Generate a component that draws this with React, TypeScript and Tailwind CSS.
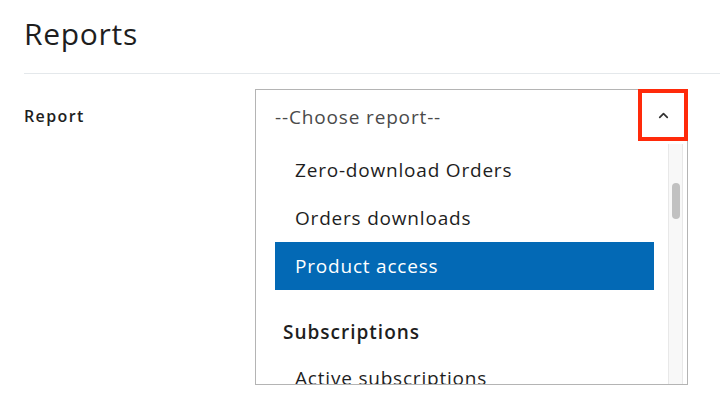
import { ChevronUp } from 'lucide-react';

// ── Reports page ───────────────────────────────────────────────────────────
// Heading, divider and a "Report" field whose select is shown open, with the
// option list scrolled a little and "Product access" highlighted.

type Option = { label: string; selected?: boolean };
type Group = { title?: string; options: Option[] };

const groups: Group[] = [
  {
    options: [
      { label: 'Zero-download Orders' },
      { label: 'Orders downloads' },
      { label: 'Product access', selected: true },
    ],
  },
  {
    title: 'Subscriptions',
    options: [
      { label: 'Active subscriptions' },
      { label: 'Cancelled subscriptions' },
    ],
  },
];

function OptionRow({ option }: { option: Option }) {
  return (
    <div
      className={
        option.selected
          ? 'flex h-12 items-center bg-[#0369b5] pl-5 text-white'
          : 'flex h-12 items-center pl-5 text-[#1e1e1e]'
      }
    >
      {option.label}
    </div>
  );
}

function ReportSelect() {
  return (
    <div className="relative flex h-[296px] w-[433px] flex-col border border-[#b4b4b4] bg-white">
      {/* Closed value row */}
      <div className="flex h-[54px] shrink-0 items-center pl-[19px] text-[19px] tracking-[0.85px] text-[#4a4a4a]">
        --Choose report--
      </div>

      {/* Toggle, outlined in red */}
      <div className="absolute -right-px -top-px flex h-[52px] w-[50px] items-center justify-center border-[4px] border-[#ff2a0a] bg-white">
        <ChevronUp size={15} strokeWidth={2.75} className="text-[#333]" />
      </div>

      {/* Open option list */}
      <div className="flex min-h-0 flex-1">
        <div className="min-w-0 flex-1 overflow-hidden pl-[19px] pr-[14px] pt-[2px] text-[19px] tracking-[0.8px]">
          {groups.map((group, i) => (
            <div key={i}>
              {group.title && (
                <div className="pl-2 pt-[31px] pb-[11px] font-semibold leading-[22px] tracking-[1px] text-[#1e1e1e]">
                  {group.title}
                </div>
              )}
              {group.options.map((o) => (
                <OptionRow key={o.label} option={o} />
              ))}
            </div>
          ))}
        </div>
        {/* Scrollbar */}
        <div className="mr-[4px] flex w-[15px] shrink-0 justify-center border-x border-[#e8e8e8] bg-[#f8f8f8]">
          <div className="mt-[39px] h-9 w-2 rounded-full bg-[#c1c1c1]" />
        </div>
      </div>
    </div>
  );
}

export default function App() {
  return (
    <div className="h-[414px] w-[720px] overflow-hidden bg-white font-['Open_Sans',sans-serif] text-[#1e1e1e]">
      <div className="pl-6">
        <h1 className="pt-[13px] pb-[18px] text-[30px] font-normal leading-[42px] tracking-[0.7px]">
          Reports
        </h1>
        <div className="h-px bg-[#e4e8eb]" />
      </div>

      <div className="flex pl-6 pt-[15px]">
        <div className="w-[231px] pt-[15px] text-[16px] font-semibold tracking-[1.4px]">Report</div>
        <ReportSelect />
      </div>
    </div>
  );
}
